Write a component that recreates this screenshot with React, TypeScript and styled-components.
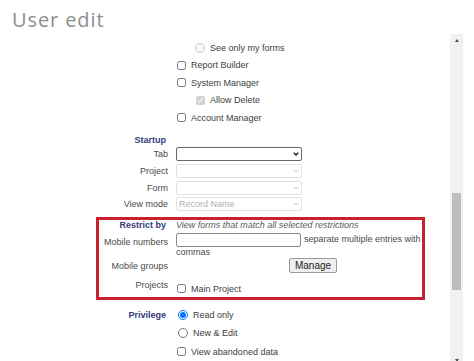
import React from 'react';
import styled, { createGlobalStyle } from 'styled-components';

const GlobalStyle = createGlobalStyle`
  body {
    margin: 0;
    background: #ffffff;
    font-family: "Liberation Sans", Arial, sans-serif;
    overflow: hidden;
  }
`;

const Page = styled.div`
  width: 474px;
  height: 361px;
  overflow: hidden;
`;

const Title = styled.h1`
  margin: 0;
  padding: 6px 0 0 12px;
  height: 28px;
  font-family: "Open Sans", sans-serif;
  font-weight: 400;
  font-size: 20px;
  line-height: 28px;
  letter-spacing: 0.9px;
  color: #8e8e8e;
`;

const Panel = styled.div`
  display: flex;
  width: 463px;
  height: 333px;
`;

const Content = styled.div`
  flex: 1;
  padding-top: 2px;
  overflow: hidden;
`;

const Form = styled.div`
  margin-left: 96px;
  width: 329px;
  font-size: 9px;
  color: #3e3e3e;
`;

const Section = styled.div<{ $outlined?: boolean; $gap?: number }>`
  border: 3px solid ${({ $outlined }) => ($outlined ? '#c8212d' : 'transparent')};
  margin-top: ${({ $gap }) => $gap ?? 0}px;
`;

const Row = styled.div<{ $h: number; $top?: number; $align?: string }>`
  display: grid;
  grid-template-columns: 69px 1fr;
  column-gap: 8px;
  align-items: ${({ $align }) => $align ?? 'center'};
  height: ${({ $h }) => $h}px;
  margin-top: ${({ $top }) => $top ?? 0}px;
`;

const Label = styled.div<{ $heading?: boolean; $pad?: number }>`
  text-align: right;
  line-height: 10px;
  white-space: nowrap;
  color: ${({ $heading }) => ($heading ? '#363a7c' : '#4a4a4a')};
  font-weight: ${({ $heading }) => ($heading ? 700 : 400)};
  padding-right: ${({ $heading }) => ($heading ? 2 : 0)}px;
  padding-top: ${({ $pad }) => $pad ?? 0}px;
`;

const Value = styled.div`
  line-height: 10px;
`;

const CheckItem = styled.label<{ $indent?: number; $pad?: number }>`
  display: flex;
  align-items: center;
  gap: 5px;
  padding-left: ${({ $indent }) => $indent ?? 1}px;
  padding-top: ${({ $pad }) => $pad ?? 0}px;
  line-height: 10px;
  color: #3e3e3e;
`;

const Box = styled.input`
  width: 9px;
  height: 9px;
  margin: 0;
`;

const Radio = styled.input`
  width: 10px;
  height: 10px;
  margin: 0;
`;

const SelectWrap = styled.div`
  position: relative;
  width: 126px;
  height: 14px;
`;

const Select = styled.select`
  appearance: none;
  box-sizing: border-box;
  width: 100%;
  height: 14px;
  padding: 0 2px;
  font-family: inherit;
  font-size: 9px;
  border-radius: 2px;
  background: #ffffff;
  border: 1px solid ${({ disabled }) => (disabled ? '#e2e2e2' : '#6a6a6a')};
  color: ${({ disabled }) => (disabled ? '#b0b0b0' : '#222')};
  opacity: 1;
`;

const Chevron = styled.svg`
  position: absolute;
  right: 3px;
  top: 5px;
  width: 6px;
  height: 4px;
  pointer-events: none;
`;

const TextInput = styled.input`
  box-sizing: border-box;
  width: 125px;
  height: 14px;
  margin: 0 3px 0 0;
  padding: 0 2px;
  border: 1px solid #8a8a8a;
  border-radius: 2px;
  vertical-align: middle;
  font-size: 9px;
`;

const NumbersCell = styled.div`
  padding-top: 3px;
  line-height: 10px;
  color: #4a4a4a;
`;

const Hint = styled.span`
  font-style: italic;
  color: #5a5a5a;
`;

const ManageButton = styled.button`
  box-sizing: border-box;
  margin-left: 113px;
  width: 48px;
  height: 15px;
  padding: 0;
  font-family: inherit;
  font-size: 10px;
  color: #222;
  background: #efefef;
  border: 1px solid #9a9a9a;
  border-radius: 2px;
`;

const Scrollbar = styled.div`
  display: flex;
  flex-direction: column;
  width: 13px;
  background: #f1f1f1;
`;

const ScrollArrow = styled.div`
  display: flex;
  align-items: center;
  justify-content: center;
  height: 13px;
`;

const Triangle = styled.div<{ $down?: boolean }>`
  width: 0;
  height: 0;
  border-left: 2.5px solid transparent;
  border-right: 2.5px solid transparent;
  border-${({ $down }) => ($down ? 'top' : 'bottom')}: 3px solid #505050;
`;

const Thumb = styled.div`
  margin: 146px 2px 0;
  height: 97px;
  background: #bdbdbd;
`;

const Spacer = styled.div`
  flex: 1;
`;

type DropdownProps = { disabled?: boolean; text?: string };

const Dropdown = ({ disabled, text }: DropdownProps) => (
  <SelectWrap>
    <Select disabled={disabled} defaultValue="v">
      <option value="v">{text ?? ''}</option>
    </Select>
    <Chevron viewBox="0 0 6 4">
      <path
        d="M0.8 0.8 L3 3 L5.2 0.8"
        fill="none"
        stroke={disabled ? '#b5b5b5' : '#1e1e1e'}
        strokeWidth={disabled ? 0.8 : 1.4}
      />
    </Chevron>
  </SelectWrap>
);

export default function App() {
  return (
    <Page>
      <GlobalStyle />
      <Title>User edit</Title>
      <Panel>
        <Content>
          <Form>
            <Section>
              <Row $h={17.5}>
                <div />
                <CheckItem $indent={19}>
                  <Radio type="radio" disabled /> See only my forms
                </CheckItem>
              </Row>
              <Row $h={17.5}>
                <div />
                <CheckItem>
                  <Box type="checkbox" /> Report Builder
                </CheckItem>
              </Row>
              <Row $h={17.5}>
                <div />
                <CheckItem>
                  <Box type="checkbox" /> System Manager
                </CheckItem>
              </Row>
              <Row $h={17.5}>
                <div />
                <CheckItem $indent={20}>
                  <Box type="checkbox" checked disabled readOnly /> Allow Delete
                </CheckItem>
              </Row>
              <Row $h={17.5}>
                <div />
                <CheckItem>
                  <Box type="checkbox" /> Account Manager
                </CheckItem>
              </Row>

              <Row $h={12} $top={7.5}>
                <Label $heading>Startup</Label>
                <div />
              </Row>
              <Row $h={16.7}>
                <Label>Tab</Label>
                <Dropdown />
              </Row>
              <Row $h={16.7}>
                <Label>Project</Label>
                <Dropdown disabled />
              </Row>
              <Row $h={16.7}>
                <Label>Form</Label>
                <Dropdown disabled />
              </Row>
              <Row $h={16.7}>
                <Label>View mode</Label>
                <Dropdown disabled text="Record Name" />
              </Row>
            </Section>

            <Section $outlined $gap={1}>
              <Row $h={10.4}>
                <Label $heading>Restrict by</Label>
                <Value>
                  <Hint>View forms that match all selected restrictions</Hint>
                </Value>
              </Row>
              <Row $h={27} $align="start">
                <Label $pad={7}>Mobile numbers</Label>
                <NumbersCell>
                  <TextInput type="text" />
                  separate multiple entries with commas
                </NumbersCell>
              </Row>
              <Row $h={17}>
                <Label>Mobile groups</Label>
                <div>
                  <ManageButton>Manage</ManageButton>
                </div>
              </Row>
              <Row $h={19} $top={3.6} $align="start">
                <Label $pad={2}>Projects</Label>
                <CheckItem $pad={6}>
                  <Box type="checkbox" /> Main Project
                </CheckItem>
              </Row>
            </Section>

            <Section $gap={2.75}>
              <Row $h={18.5}>
                <Label $heading>Privilege</Label>
                <CheckItem $indent={2}>
                  <Radio type="radio" name="priv" defaultChecked /> Read only
                </CheckItem>
              </Row>
              <Row $h={18.5}>
                <div />
                <CheckItem $indent={2}>
                  <Radio type="radio" name="priv" /> New &amp; Edit
                </CheckItem>
              </Row>
              <Row $h={18.5}>
                <div />
                <CheckItem>
                  <Box type="checkbox" /> View abandoned data
                </CheckItem>
              </Row>
            </Section>
          </Form>
        </Content>
        <Scrollbar>
          <ScrollArrow>
            <Triangle />
          </ScrollArrow>
          <Thumb />
          <Spacer />
          <ScrollArrow>
            <Triangle $down />
          </ScrollArrow>
        </Scrollbar>
      </Panel>
    </Page>
  );
}
